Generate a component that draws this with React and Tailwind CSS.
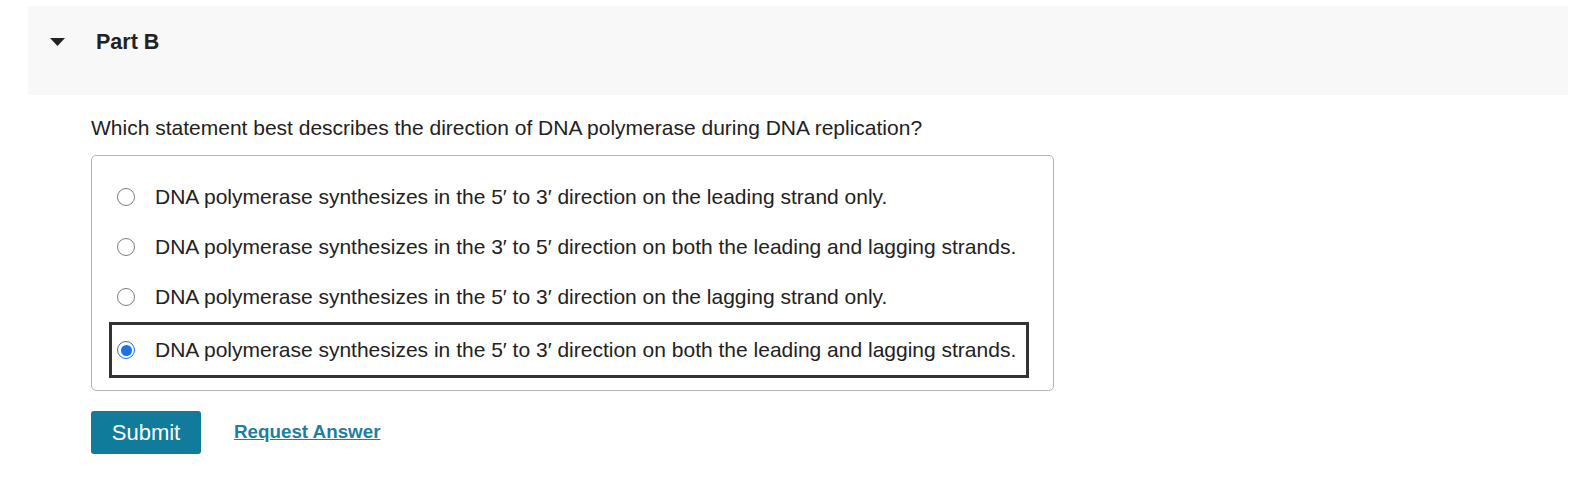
import { useState } from "react"

const options = [
    "DNA polymerase synthesizes in the 5\u2032 to 3\u2032 direction on the leading strand only.",
    "DNA polymerase synthesizes in the 3\u2032 to 5\u2032 direction on both the leading and lagging strands.",
    "DNA polymerase synthesizes in the 5\u2032 to 3\u2032 direction on the lagging strand only.",
    "DNA polymerase synthesizes in the 5\u2032 to 3\u2032 direction on both the leading and lagging strands.",
]

function Radio({ checked }) {
    if (checked) {
        return (
            <span className="w-[18px] h-[18px] rounded-full border-[1.5px] border-[#1a73e8] bg-white flex items-center justify-center shrink-0">
                <span className="w-[11px] h-[11px] rounded-full bg-[#1a73e8]" />
            </span>
        )
    }
    return <span className="w-[18px] h-[18px] rounded-full border-[1.5px] border-[#7d7d7d] bg-white shrink-0" />
}

export default function App() {
    const [selected, setSelected] = useState(3)

    return (
        <div className="w-[1582px] h-[480px] bg-white pt-[6px] pl-[28px] font-['Liberation_Sans',Arial,sans-serif] text-[#222]">
            {/* Part header */}
            <div className="w-[1540px] h-[89px] bg-[#f8f8f8] flex items-start pt-[22px]">
                <svg width="15" height="8" viewBox="0 0 15 8" className="ml-[22px] mt-[10px]">
                    <polygon points="0,0 15,0 7.5,8" fill="#222" />
                </svg>
                <span className="ml-[31px] text-[21.5px] leading-[28px] font-bold text-[#222]">Part B</span>
            </div>

            <div className="pl-[63px]">
                <p className="mt-[19px] text-[21px] leading-[28px] text-[#222]">
                    Which statement best describes the direction of DNA polymerase during DNA replication?
                </p>

                {/* Answer choices */}
                <div className="mt-[13px] w-[963px] h-[236px] border border-[#b5b5b5] rounded-[5px] pt-[16px] pl-[17px]">
                    {options.map((text, i) => (
                        <div
                            key={i}
                            onClick={() => setSelected(i)}
                            className={
                                selected === i
                                    ? "w-[920px] h-[56px] flex items-center border-[3px] border-[#333] pl-[5px] cursor-pointer"
                                    : "w-[920px] h-[50px] flex items-center border-[3px] border-transparent pl-[5px] cursor-pointer"
                            }
                        >
                            <Radio checked={selected === i} />
                            <span className="ml-[20px] text-[21px] leading-[28px] text-[#222]">{text}</span>
                        </div>
                    ))}
                </div>

                {/* Actions */}
                <div className="mt-[20px] flex items-center">
                    <button className="w-[110px] h-[43px] bg-[#117b9b] text-white text-[22px] rounded-[3px]">
                        Submit
                    </button>
                    <a href="#" className="ml-[33px] text-[18.8px] font-bold text-[#1e7ea1] underline">
                        Request Answer
                    </a>
                </div>
            </div>
        </div>
    )
}
